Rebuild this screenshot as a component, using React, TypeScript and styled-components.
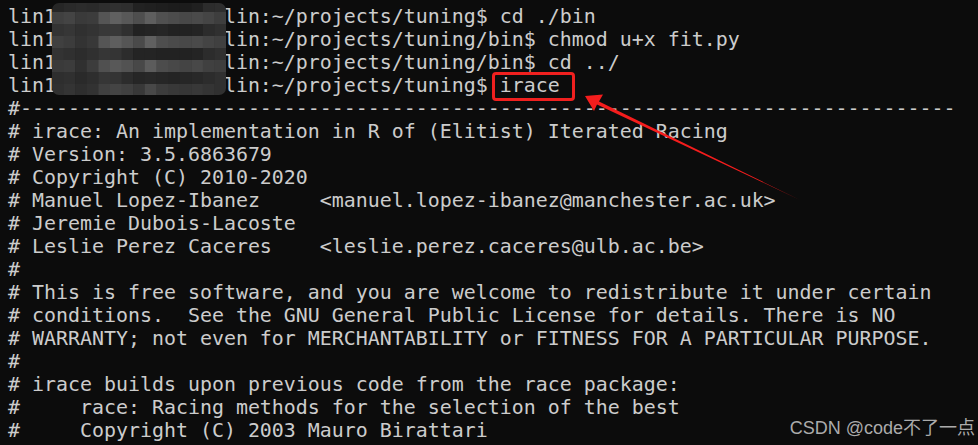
import React from "react";
import styled, { createGlobalStyle } from "styled-components";

const Global = createGlobalStyle`
  html, body { margin: 0; padding: 0; background: #0c0c0c; }
  body { width: 978px; height: 445px; overflow: hidden; }
`;

const Terminal = styled.div`
  position: relative;
  width: 978px;
  height: 445px;
  box-sizing: border-box;
  padding: 5px 0 0 8px;
  background: #0c0c0c;
  color: #cccccc;
  font-family: "DejaVu Sans Mono", "Liberation Mono", monospace;
  font-size: 19.93px;
  overflow: hidden;
`;

const Line = styled.div`
  height: 23px;
  line-height: 23px;
  white-space: pre;
`;

const Highlight = styled.span`
  position: relative;
  display: inline-block;
  line-height: 23px;
  &::after {
    content: "";
    position: absolute;
    left: -8px;
    right: -15px;
    top: -2px;
    bottom: -4px;
    border: 3px solid #f0201f;
    border-radius: 4px;
  }
`;

const Overlay = styled.svg`
  position: absolute;
  left: 0;
  top: 0;
  pointer-events: none;
`;

const Watermark = styled.div`
  position: absolute;
  right: 3px;
  bottom: 6px;
  font-family: "Liberation Sans", "Noto Sans CJK SC", sans-serif;
  font-size: 18px;
  color: #ababab;
  white-space: pre;
`;

const ROWS: number[][] = [
  [0x26, 0x2a, 0x2c, 0x2a, 0x2e, 0x30, 0x2e, 0x22, 0x20, 0x1e, 0x1c, 0x1c, 0x20, 0x2c, 0x2e],
  [0x40, 0x44, 0x3a, 0x3c, 0x55, 0x60, 0x58, 0x4e, 0x5e, 0x50, 0x4c, 0x48, 0x4a, 0x45, 0x3e],
  [0x33, 0x36, 0x30, 0x33, 0x38, 0x38, 0x30, 0x22, 0x24, 0x26, 0x22, 0x22, 0x24, 0x2c, 0x30],
  [0x40, 0x3c, 0x33, 0x38, 0x55, 0x5e, 0x55, 0x4a, 0x60, 0x4e, 0x4a, 0x48, 0x4a, 0x44, 0x40],
  [0x33, 0x30, 0x2c, 0x30, 0x36, 0x34, 0x2c, 0x24, 0x24, 0x22, 0x22, 0x22, 0x24, 0x2c, 0x30],
  [0x3a, 0x3c, 0x30, 0x3c, 0x50, 0x58, 0x52, 0x48, 0x5c, 0x4c, 0x48, 0x44, 0x48, 0x40, 0x3e],
  [0x2e, 0x30, 0x2a, 0x2e, 0x36, 0x34, 0x2c, 0x26, 0x28, 0x26, 0x24, 0x26, 0x28, 0x2c, 0x30],
  [0x30, 0x34, 0x2e, 0x32, 0x40, 0x44, 0x40, 0x38, 0x48, 0x3c, 0x38, 0x36, 0x38, 0x34, 0x30],
];

const gray = (v: number) => {
  const h = v.toString(16).padStart(2, "0");
  return `#${h}${h}${h}`;
};

const Mosaic = () => {
  const x0 = 52;
  const y0 = 3;
  const cw = 11.6;
  const rowH = [9, 12, 12, 12, 12, 12, 12, 11];
  let y = y0;
  const rects: React.ReactNode[] = [];
  ROWS.forEach((row, r) => {
    row.forEach((v, c) => {
      rects.push(
        <rect key={`${r}-${c}`} x={x0 + c * cw} y={y} width={cw + 0.5} height={rowH[r]} fill={gray(v)} />
      );
    });
    y += rowH[r];
  });
  return (
    <Overlay width={978} height={445}>
      <defs>
        <clipPath id="mclip">
          <rect x={52} y={3} width={174} height={92} rx={7} />
        </clipPath>
      </defs>
      <g clipPath="url(#mclip)">{rects}</g>
    </Overlay>
  );
};

const Arrow = () => (
  <Overlay width={978} height={445}>
    <polygon
      points="585,96 603,94.5 599,101.5 800,200 597,104.5 594,111"
      fill="#f51d1d"
    />
  </Overlay>
);

const PROMPT_PAD = "              ";
const dashes = "#" + "-".repeat(78);

const lines: string[] = [
  "# irace: An implementation in R of (Elitist) Iterated Racing",
  "# Version: 3.5.6863679",
  "# Copyright (C) 2010-2020",
  "# Manuel Lopez-Ibanez     <manuel.lopez-ibanez@manchester.ac.uk>",
  "# Jeremie Dubois-Lacoste",
  "# Leslie Perez Caceres    <leslie.perez.caceres@ulb.ac.be>",
  "#",
  "# This is free software, and you are welcome to redistribute it under certain",
  "# conditions.  See the GNU General Public License for details. There is NO",
  "# WARRANTY; not even for MERCHANTABILITY or FITNESS FOR A PARTICULAR PURPOSE.",
  "#",
  "# irace builds upon previous code from the race package:",
  "#     race: Racing methods for the selection of the best",
  "#     Copyright (C) 2003 Mauro Birattari",
];

export default function App() {
  return (
    <>
      <Global />
      <Terminal>
        <Line>{`lin1${PROMPT_PAD}lin:~/projects/tuning$ cd ./bin`}</Line>
        <Line>{`lin1${PROMPT_PAD}lin:~/projects/tuning/bin$ chmod u+x fit.py`}</Line>
        <Line>{`lin1${PROMPT_PAD}lin:~/projects/tuning/bin$ cd ../`}</Line>
        <Line>
          {`lin1${PROMPT_PAD}lin:~/projects/tuning$ `}
          <Highlight>irace</Highlight>
        </Line>
        <Line>{dashes}</Line>
        {lines.map((l, i) => (
          <Line key={i}>{l}</Line>
        ))}
        <Mosaic />
        <Arrow />
        <Watermark>CSDN @code不了一点</Watermark>
      </Terminal>
    </>
  );
}
